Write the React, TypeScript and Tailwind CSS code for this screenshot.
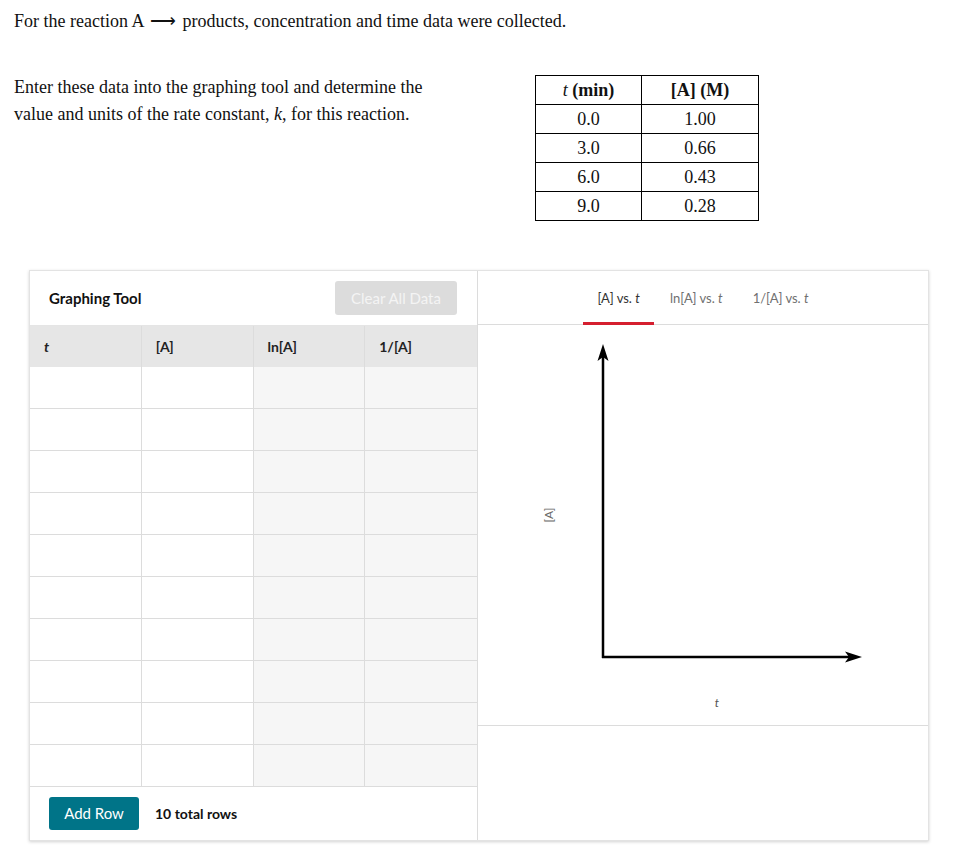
import React from 'react';

const dataRows = [
  ['0.0', '1.00'],
  ['3.0', '0.66'],
  ['6.0', '0.43'],
  ['9.0', '0.28'],
];

const tabs = [
  { label: '[A] vs.', active: true },
  { label: 'ln[A] vs.', active: false },
  { label: '1/[A] vs.', active: false },
];

function DataTable() {
  return (
    <table className="border-collapse border border-black text-[18px] text-[#111]">
      <thead>
        <tr className="h-[29px]">
          <th className="w-[106px] border border-black font-bold">
            <i className="font-normal">t</i> (min)
          </th>
          <th className="w-[117px] border border-black font-bold">[A] (M)</th>
        </tr>
      </thead>
      <tbody>
        {dataRows.map(([t, a]) => (
          <tr key={t} className="h-[29px] text-center">
            <td className="border border-black">{t}</td>
            <td className="border border-black">{a}</td>
          </tr>
        ))}
      </tbody>
    </table>
  );
}

function EntryGrid() {
  const heads = ['t', '[A]', 'ln[A]', '1/[A]'];
  const rows = Array.from({ length: 10 }, (_, i) => i);
  return (
    <div className="border-t border-[#e5e5e5]">
      <div className="grid h-[41px] grid-cols-4 bg-[#e6e6e6] text-[14px] font-bold text-[#222]">
        {heads.map((h, i) => (
          <div
            key={h}
            className={`flex items-center pl-[14px] ${i < 3 ? 'border-r border-[#dcdcdc]' : ''}`}
          >
            {i === 0 ? <i>{h}</i> : h}
          </div>
        ))}
      </div>
      {rows.map((r) => (
        <div key={r} className="grid h-[42px] grid-cols-4 border-b border-[#dcdcdc]">
          <div className="border-r border-[#dcdcdc] bg-white" />
          <div className="border-r border-[#dcdcdc] bg-white" />
          <div className="border-r border-[#dcdcdc] bg-[#f6f6f6]" />
          <div className="bg-[#f6f6f6]" />
        </div>
      ))}
    </div>
  );
}

function Axes() {
  return (
    <svg width="450" height="401" className="block">
      <line x1="125" y1="27" x2="125" y2="333" stroke="#000" strokeWidth="2.5" />
      <path d="M125 19 L130.5 36 L125 32 L119.5 36 Z" fill="#000" />
      <line x1="124" y1="332" x2="376" y2="332" stroke="#000" strokeWidth="2.5" />
      <path d="M384 332 L367 326.5 L371 332 L367 337.5 Z" fill="#000" />
      <text
        x="72"
        y="190"
        transform="rotate(-90 72 190)"
        textAnchor="middle"
        dominantBaseline="middle"
        fontSize="12"
        fill="#666"
        fontFamily="Lato, sans-serif"
      >
        [A]
      </text>
      <text
        x="239"
        y="382"
        textAnchor="middle"
        fontSize="12"
        fontStyle="italic"
        fill="#555"
        fontFamily="Lato, sans-serif"
      >
        t
      </text>
    </svg>
  );
}

export default function App() {
  return (
    <div className="min-h-[851px] bg-white text-[#111]">
      <div className="px-[14px] pt-[8px] font-['Liberation_Serif',serif] text-[18px]">
        <p className="leading-[26px]">
          For the reaction A <span className="mx-[2px]">⟶</span> products, concentration and time data were collected.
        </p>

        <div className="mt-[40px] flex items-start">
          <p className="w-[521px] leading-[27px]">
            Enter these data into the graphing tool and determine the
            <br />
            value and units of the rate constant, <i>k</i>, for this reaction.
          </p>
          <div className="pt-[1px]">
            <DataTable />
          </div>
        </div>
      </div>

      <div className="ml-[29px] mt-[49px] flex h-[571px] w-[900px] border border-[#e3e3e3] bg-white font-['Lato',sans-serif] shadow-[0_1px_3px_rgba(0,0,0,0.18)]">
        {/* left: data entry */}
        <div className="flex w-[449px] flex-col border-r border-[#dcdcdc]">
          <div className="flex h-[54px] items-center justify-between pl-[19px] pr-[20px]">
            <span className="text-[15px] font-bold text-[#111]">Graphing Tool</span>
            <button className="h-[34px] w-[122px] rounded-[3px] bg-[#dcdcdc] text-[15px] text-[#f4f4f4]">
              Clear All Data
            </button>
          </div>
          <EntryGrid />
          <div className="flex flex-1 items-center gap-[16px] pl-[19px]">
            <button className="h-[33px] w-[90px] rounded-[3px] bg-[#007488] text-[15px] text-white">
              Add Row
            </button>
            <span className="text-[14px] font-bold text-[#111]">10 total rows</span>
          </div>
        </div>

        {/* right: graph */}
        <div className="flex flex-1 flex-col">
          <div className="flex h-[54px] items-end justify-center gap-[2px] border-b border-[#dcdcdc]">
            {tabs.map((tab) => (
              <div
                key={tab.label}
                className={`-mb-px flex h-[54px] items-center px-[14px] pt-[1px] text-[13px] ${
                  tab.active
                    ? 'border-b-[3px] border-[#d51f2f] pt-[4px] text-[#333]'
                    : 'text-[#707070]'
                }`}
              >
                <span>
                  {tab.label} <i>t</i>
                </span>
              </div>
            ))}
          </div>
          <div className="h-[401px] border-b border-[#dcdcdc]">
            <Axes />
          </div>
          <div className="flex-1" />
        </div>
      </div>
    </div>
  );
}
